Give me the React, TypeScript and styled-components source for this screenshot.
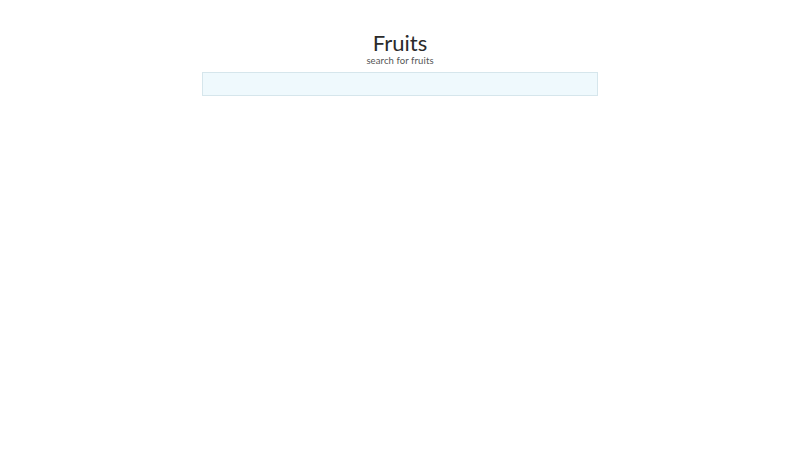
import styled, { createGlobalStyle } from "styled-components";

const GlobalStyle = createGlobalStyle`
  html, body {
    margin: 0;
    padding: 0;
    background: #ffffff;
  }
  body {
    font-family: Lato, "Open Sans", "Liberation Sans", sans-serif;
    color: #333333;
  }
`;

const Page = styled.main`
  display: flex;
  flex-direction: column;
  align-items: center;
  padding-top: 30px;
`;

const Title = styled.h1`
  margin: 0;
  font-size: 22px;
  font-weight: 400;
  line-height: 25px;
  color: #2b2b2b;
`;

const Subtitle = styled.p`
  margin: 0;
  font-size: 9.5px;
  line-height: 12px;
  color: #555555;
  letter-spacing: 0.1px;
`;

const SearchInput = styled.input`
  box-sizing: border-box;
  margin-top: 5px;
  width: 396px;
  height: 24px;
  border: 1px solid #d6e6ec;
  background: #eff9fd;
  outline: none;
  padding: 0 8px;
  font: inherit;
  font-size: 12px;
`;

export default function App() {
  return (
    <>
      <GlobalStyle />
      <Page>
        <Title>Fruits</Title>
        <Subtitle>search for fruits</Subtitle>
        <SearchInput type="text" />
      </Page>
    </>
  );
}
